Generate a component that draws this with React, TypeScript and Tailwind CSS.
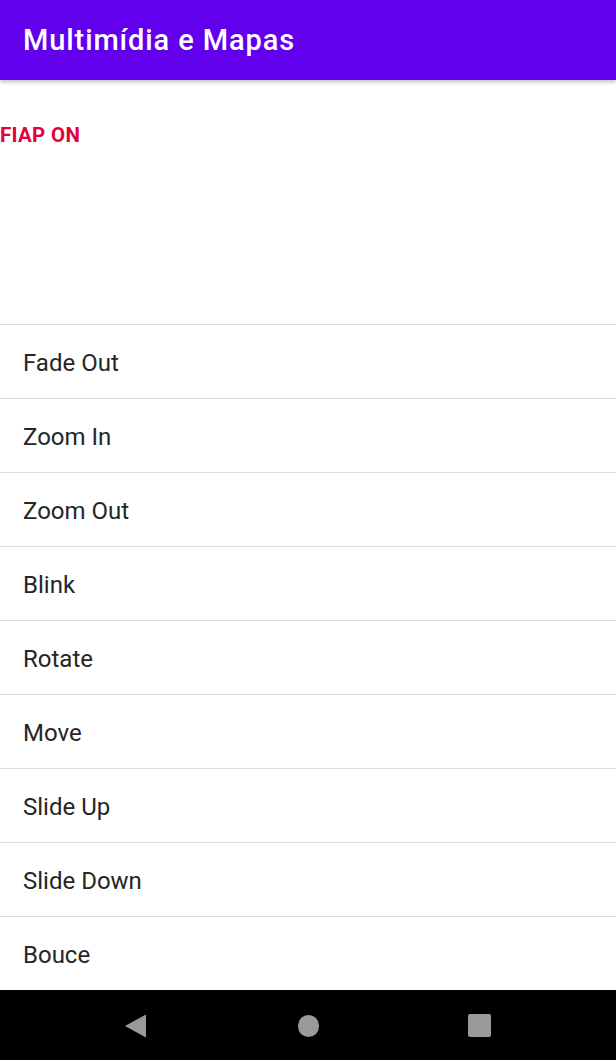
import React from "react";

const items = ["Fade Out", "Zoom In", "Zoom Out", "Blink", "Rotate", "Move", "Slide Up", "Slide Down", "Bouce"];

export default function App() {
  return (
    <div className="w-[616px] h-[1060px] flex flex-col bg-white overflow-hidden" style={{ fontFamily: "Roboto, 'Noto Sans', sans-serif" }}>
      <div className="relative z-10 h-[80px] shrink-0 bg-[#6200EE] flex items-center pl-[23px] shadow-[0_2px_4px_rgba(0,0,0,0.25)]">
        <span className="text-white text-[29px] font-medium leading-none tracking-[0.9px] mt-[1px]">Multimídia e Mapas</span>
      </div>
      <div className="h-[244px] shrink-0 pt-[44px]">
        <span className="block text-[#E4003A] text-[20.5px] font-bold leading-[22px] tracking-[0.3px]">FIAP ON</span>
      </div>
      <div className="flex-1 flex flex-col">
        {items.map((t) => (
          <div key={t} className="h-[74px] shrink-0 border-t border-[#dcdcdc] flex items-center pl-[23px]">
            <span className="text-[24px] text-[#262626] leading-none mt-[3px]">{t}</span>
          </div>
        ))}
      </div>
      <div className="h-[70px] shrink-0 bg-black relative">
        <svg className="absolute left-[124px] top-[24px]" width="23" height="24" viewBox="0 0 23 24">
          <path d="M22 0.5 L22 23.5 L1 12 Z" fill="#9a9a9a" />
        </svg>
        <div className="absolute left-[298px] top-[25px] w-[21px] h-[22px] rounded-full bg-[#9a9a9a]" />
        <div className="absolute left-[468px] top-[24px] w-[23px] h-[23px] rounded-[2px] bg-[#9a9a9a]" />
      </div>
    </div>
  );
}
